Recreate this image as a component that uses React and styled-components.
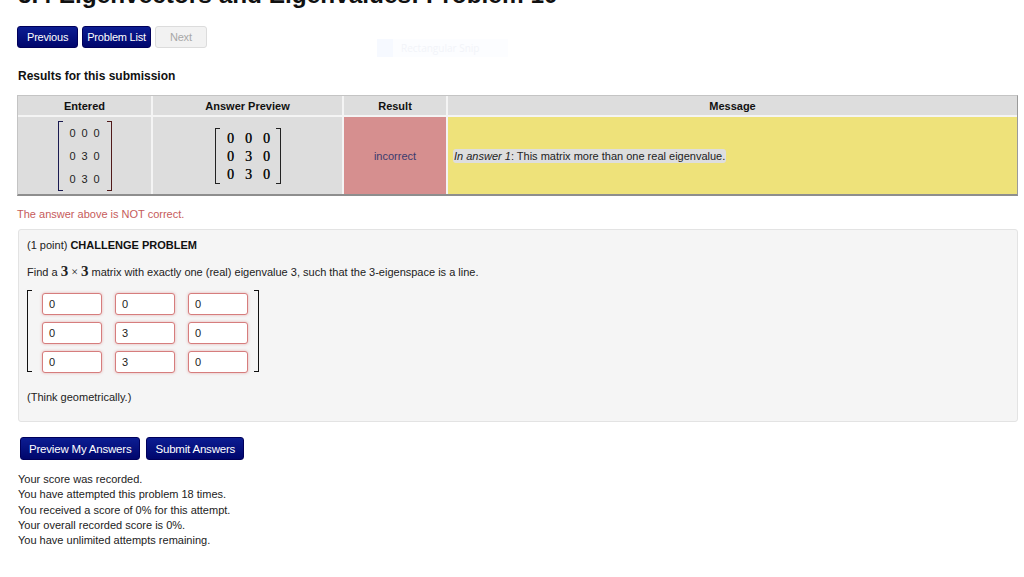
import React from 'react'
import styled, { createGlobalStyle } from 'styled-components'

const GlobalStyle = createGlobalStyle`
  html, body {
    margin: 0;
    padding: 0;
    background: #ffffff;
    overflow: hidden;
  }
  body {
    font-family: "Liberation Sans", Arial, sans-serif;
    font-size: 11px;
    color: #222;
  }
`

const Page = styled.div`
  position: relative;
  width: 1024px;
  height: 577px;
  overflow: hidden;
  padding: 0 6px 0 17px;
  box-sizing: border-box;
`

const Title = styled.h1`
  font-size: 24.4px;
  font-weight: bold;
  margin: -17px 0 0 1px;
  line-height: 24px;
  height: 24px;
  color: #111;
  white-space: nowrap;
`

const NavBar = styled.div`
  display: flex;
  gap: 4px;
  margin-top: 19px;
`

const NavButton = styled.button`
  font-family: "Liberation Sans", Arial, sans-serif;
  font-size: 11px;
  height: 22px;
  padding: 0 ${({ pad }) => pad || '9px'};
  border-radius: 3px;
  letter-spacing: -0.2px;
  border: 1px solid ${({ disabled }) => (disabled ? '#dcdcdc' : '#00005a')};
  background: ${({ disabled }) =>
    disabled ? '#f2f2f2' : 'linear-gradient(#0c1d92, #00066c)'};
  color: ${({ disabled }) => (disabled ? '#a8a8a8' : '#ffffff')};
  cursor: pointer;
`

const SnipGhost = styled.div`
  position: absolute;
  left: 377px;
  top: 39px;
  width: 131px;
  height: 18px;
  display: flex;
  align-items: center;
  gap: 8px;
  background: #fcfdff;
  color: #f2f4f9;
  font-size: 10px;
  font-family: "Open Sans", sans-serif;
  span:first-child {
    width: 16px;
    height: 18px;
    background: #f6f9ff;
  }
`

const SectionTitle = styled.h3`
  font-size: 12px;
  font-weight: bold;
  margin: 21px 0 12px 1px;
  color: #111;
`

const ResultTable = styled.table`
  width: 1001px;
  border-collapse: separate;
  border-spacing: 0;
  border: 1px solid #c4c4c4;
  border-bottom: 2px solid #8e8e8e;
  border-right: 1px solid #9a9a9a;
  background: #efefef;
`

const HeadCell = styled.th`
  height: 19px;
  padding: 0;
  font-size: 11px;
  font-weight: bold;
  background: #dddddd;
  color: #111;
  width: ${({ w }) => w};
  border-right: 2px solid #f4f4f4;
  border-bottom: 2px solid #f4f4f4;
  &:last-child {
    border-right: none;
  }
`

const BodyCell = styled.td`
  height: 77px;
  padding: 0;
  text-align: ${({ align }) => align || 'center'};
  background: ${({ bg }) => bg || '#dddddd'};
  border-right: 2px solid #f4f4f4;
  vertical-align: middle;
  &:last-child {
    border-right: none;
  }
`

const Bracketed = styled.div`
  display: inline-flex;
  align-items: stretch;
  vertical-align: middle;
  height: ${({ h }) => h || 'auto'};
`

const Bracket = styled.div`
  width: 4px;
  height: ${({ h }) => h || 'auto'};
  border: ${({ thick }) => thick || '1px'} solid ${({ color }) => color || '#222'};
  ${({ side }) => (side === 'left' ? 'border-right: none;' : 'border-left: none;')}
`

const SmallGrid = styled.div`
  display: grid;
  grid-template-columns: repeat(3, 12px);
  grid-auto-rows: 23px;
  align-items: center;
  justify-items: center;
  padding: 1px 4px 0;
  font-size: 11px;
  color: #222;
`

const MathGrid = styled.div`
  display: grid;
  grid-template-columns: repeat(3, 18px);
  grid-auto-rows: 18px;
  align-items: center;
  justify-items: center;
  padding: 2px 0 0 2px;
  font-family: "Liberation Serif", "Times New Roman", serif;
  font-size: 14px;
  color: #111;
  text-shadow: 0.3px 0 0 #111;
`

const Incorrect = styled.span`
  font-size: 11px;
  color: #3b3b6e;
`

const Message = styled.span`
  margin-left: 5px;
  padding: 1px 1px;
  background: #dedede;
  border-radius: 3px;
  font-size: 11px;
  color: #222;
  em {
    font-style: italic;
  }
`

const NotCorrect = styled.p`
  color: #c65b5b;
  font-size: 11px;
  margin: 12px 0 9px 0;
`

const ProblemBox = styled.div`
  width: 1000px;
  box-sizing: border-box;
  margin-left: 1px;
  padding: 8px 8px 17px;
  background: #f5f5f5;
  border: 1px solid #e3e3e3;
  border-radius: 3px;
`

const ProblemText = styled.p`
  margin: ${({ margin }) => margin || '0'};
  font-size: 11px;
  line-height: 14px;
  color: #222;
  b {
    font-weight: bold;
    color: #111;
  }
`

const MathInline = styled.span`
  font-family: "Liberation Serif", "Times New Roman", serif;
  font-size: 15px;
  font-weight: bold;
  small {
    font-weight: normal;
    font-size: 12px;
    margin: 0 3px;
  }
`

const InputMatrix = styled.div`
  display: flex;
  align-items: flex-start;
  margin: 11px 0 0 0;
  height: 86px;
`

const InputGrid = styled.div`
  display: grid;
  grid-template-columns: repeat(3, 60px);
  grid-auto-rows: 22px;
  column-gap: 13px;
  row-gap: 7px;
  padding: 3px 6px 0 10px;
`

const Cell = styled.div`
  box-sizing: border-box;
  background: #ffffff;
  border: 1px solid #d67d7d;
  border-radius: 3px;
  box-shadow: 0 0 3px rgba(208, 90, 90, 0.45);
  font-size: 11px;
  color: #222;
  display: flex;
  align-items: center;
  padding-left: 6px;
`

const ActionBar = styled.div`
  display: flex;
  gap: 6px;
  margin: 15px 0 0 3px;
`

const ActionButton = styled(NavButton)`
  height: 23px;
  font-size: 11.5px;
  padding: 0 8px;
`

const ScoreLines = styled.div`
  margin: 12px 0 0 1px;
  font-size: 11px;
  line-height: 15.3px;
  color: #222;
`

const entered = [
  ['0', '0', '0'],
  ['0', '3', '0'],
  ['0', '3', '0'],
]

export default function App() {
  return (
    <>
      <GlobalStyle />
      <Page>
        <Title>5.4 Eigenvectors and Eigenvalues: Problem 10</Title>
        <NavBar>
          <NavButton>Previous</NavButton>
          <NavButton pad="4px">Problem List</NavButton>
          <NavButton disabled pad="14px">Next</NavButton>
        </NavBar>
        <SnipGhost>
          <span />
          <span>Rectangular Snip</span>
        </SnipGhost>

        <SectionTitle>Results for this submission</SectionTitle>
        <ResultTable>
          <thead>
            <tr>
              <HeadCell w="133px">Entered</HeadCell>
              <HeadCell w="189px">Answer Preview</HeadCell>
              <HeadCell w="102px">Result</HeadCell>
              <HeadCell>Message</HeadCell>
            </tr>
          </thead>
          <tbody>
            <tr>
              <BodyCell>
                <Bracketed h="70px">
                  <Bracket side="left" thick="1.5px" color="#1a1a50" />
                  <SmallGrid>
                    {entered.flat().map((v, i) => (
                      <span key={i}>{v}</span>
                    ))}
                  </SmallGrid>
                  <Bracket side="right" thick="1.5px" color="#501a1a" />
                </Bracketed>
              </BodyCell>
              <BodyCell>
                <Bracketed>
                  <Bracket side="left" />
                  <MathGrid>
                    {entered.flat().map((v, i) => (
                      <span key={i}>{v}</span>
                    ))}
                  </MathGrid>
                  <Bracket side="right" />
                </Bracketed>
              </BodyCell>
              <BodyCell bg="#d68f8f">
                <Incorrect>incorrect</Incorrect>
              </BodyCell>
              <BodyCell bg="#eee27a" align="left">
                <Message>
                  <em>In answer 1</em>: This matrix more than one real eigenvalue.
                </Message>
              </BodyCell>
            </tr>
          </tbody>
        </ResultTable>

        <NotCorrect>The answer above is NOT correct.</NotCorrect>

        <ProblemBox>
          <ProblemText>
            (1 point) <b>CHALLENGE PROBLEM</b>
          </ProblemText>
          <ProblemText margin="12px 0 0 0">
            Find a <MathInline>3<small>×</small>3</MathInline> matrix with exactly one (real) eigenvalue 3, such that the 3-eigenspace is a line.
          </ProblemText>
          <InputMatrix>
            <Bracket side="left" thick="1.5px" color="#111" h="80px" />
            <InputGrid>
              {entered.flat().map((v, i) => (
                <Cell key={i}>{v}</Cell>
              ))}
            </InputGrid>
            <Bracket side="right" thick="1.5px" color="#111" h="80px" />
          </InputMatrix>
          <ProblemText margin="14px 0 0 0">(Think geometrically.)</ProblemText>
        </ProblemBox>

        <ActionBar>
          <ActionButton>Preview My Answers</ActionButton>
          <ActionButton>Submit Answers</ActionButton>
        </ActionBar>

        <ScoreLines>
          <div>Your score was recorded.</div>
          <div>You have attempted this problem 18 times.</div>
          <div>You received a score of 0% for this attempt.</div>
          <div>Your overall recorded score is 0%.</div>
          <div>You have unlimited attempts remaining.</div>
        </ScoreLines>
      </Page>
    </>
  )
}
